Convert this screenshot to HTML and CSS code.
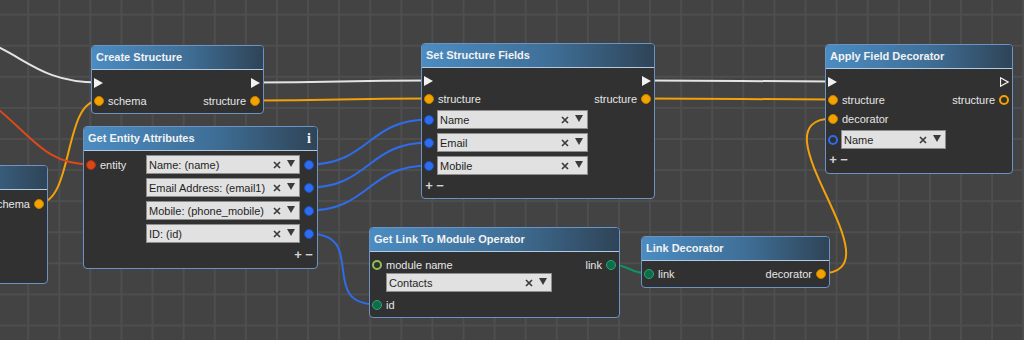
FILE: index.html
```html
<!DOCTYPE html>
<html lang="en">
<head>
    <meta charset="UTF-8">
    <meta name="viewport" content="width=device-width, initial-scale=1.0">
    <title>Structure Graph</title>
    <link rel="stylesheet" href="styles.css">
</head>
<body>
    <div class="canvas">
        <svg class="wires" width="1024" height="340" viewBox="0 0 1024 340">
            <!-- execution flow -->
            <path class="wire flow" d="M -40 35 C 20 45, 30 82.5, 98 82.5"/>
            <path class="wire flow" d="M 254 82.5 C 340 82.5, 340 80.5, 426 80.5"/>
            <path class="wire flow" d="M 649 80.5 C 740 80.5, 740 81.5, 830 81.5"/>
            <!-- structures -->
            <path class="wire orange" d="M 38 203.5 C 74 203.5, 63 100.5, 99 100.5"/>
            <path class="wire orange" d="M 254 100.5 C 340 100.5, 340 98.5, 429 98.5"/>
            <path class="wire orange" d="M 645 98.5 C 740 98.5, 740 99.5, 833 99.5"/>
            <path class="wire orange" d="M 820 273.5 C 905 273.5, 748 118.5, 833 118.5"/>
            <!-- entity -->
            <path class="wire red" d="M -20 95 C 30 130, 40 164.5, 91 164.5"/>
            <!-- attributes -->
            <path class="wire blue" d="M 308 164.5 C 370 164.5, 367 119.5, 429 119.5"/>
            <path class="wire blue" d="M 308 187.5 C 370 187.5, 367 142.5, 429 142.5"/>
            <path class="wire blue" d="M 308 210.5 C 370 210.5, 367 165.5, 429 165.5"/>
            <path class="wire blue" d="M 308 233.5 C 370 233.5, 316 304.5, 377 304.5"/>
            <!-- links -->
            <path class="wire teal" d="M 610 264.5 C 630 264.5, 629 273.5, 649 273.5"/>
        </svg>

        <!-- partly scrolled off the left edge -->
        <div class="node n-schema">
            <div class="node-head"></div>
            <div class="node-body">
                <div class="row">
                    <span class="grow"></span>
                    <span class="label">schema</span>
                    <span class="pin orange"></span>
                </div>
            </div>
        </div>

        <div class="node n-create">
            <div class="node-head"><span>Create Structure</span></div>
            <div class="node-body">
                <div class="row flow">
                    <svg class="tri" width="9" height="10"><polygon points="0,0 9,5 0,10"/></svg>
                    <span class="grow"></span>
                    <svg class="tri" width="9" height="10"><polygon points="0,0 9,5 0,10"/></svg>
                </div>
                <div class="row">
                    <span class="pin orange"></span>
                    <span class="label">schema</span>
                    <span class="grow"></span>
                    <span class="label">structure</span>
                    <span class="pin orange"></span>
                </div>
            </div>
        </div>

        <div class="node n-entity">
            <div class="node-head"><span>Get Entity Attributes</span><span class="info">i</span></div>
            <div class="node-body split">
                <div class="col-left">
                    <div class="row field-row">
                        <span class="pin red"></span>
                        <span class="label">entity</span>
                    </div>
                </div>
                <div class="col-right">
                    <div class="row field-row">
                        <div class="select wide">
                            <span class="value">Name: (name)</span>
                            <svg class="clear" width="8" height="8"><path d="M1 1 L7 7 M7 1 L1 7"/></svg>
                            <span class="caret"></span>
                        </div>
                        <span class="pin blue gap"></span>
                    </div>
                    <div class="row field-row">
                        <div class="select wide">
                            <span class="value">Email Address: (email1)</span>
                            <svg class="clear" width="8" height="8"><path d="M1 1 L7 7 M7 1 L1 7"/></svg>
                            <span class="caret"></span>
                        </div>
                        <span class="pin blue gap"></span>
                    </div>
                    <div class="row field-row">
                        <div class="select wide">
                            <span class="value">Mobile: (phone_mobile)</span>
                            <svg class="clear" width="8" height="8"><path d="M1 1 L7 7 M7 1 L1 7"/></svg>
                            <span class="caret"></span>
                        </div>
                        <span class="pin blue gap"></span>
                    </div>
                    <div class="row field-row">
                        <div class="select wide">
                            <span class="value">ID: (id)</span>
                            <svg class="clear" width="8" height="8"><path d="M1 1 L7 7 M7 1 L1 7"/></svg>
                            <span class="caret"></span>
                        </div>
                        <span class="pin blue gap"></span>
                    </div>
                    <div class="row pm-row right">
                        <span class="pm">+</span><span class="pm">&minus;</span>
                    </div>
                </div>
            </div>
        </div>

        <div class="node n-set">
            <div class="node-head"><span>Set Structure Fields</span></div>
            <div class="node-body">
                <div class="row flow">
                    <svg class="tri" width="9" height="10"><polygon points="0,0 9,5 0,10"/></svg>
                    <span class="grow"></span>
                    <svg class="tri" width="9" height="10"><polygon points="0,0 9,5 0,10"/></svg>
                </div>
                <div class="row">
                    <span class="pin orange"></span>
                    <span class="label">structure</span>
                    <span class="grow"></span>
                    <span class="label">structure</span>
                    <span class="pin orange"></span>
                </div>
                <div class="row field-row">
                    <span class="pin blue"></span>
                    <div class="select mid">
                        <span class="value">Name</span>
                        <svg class="clear" width="8" height="8"><path d="M1 1 L7 7 M7 1 L1 7"/></svg>
                        <span class="caret"></span>
                    </div>
                </div>
                <div class="row field-row">
                    <span class="pin blue"></span>
                    <div class="select mid">
                        <span class="value">Email</span>
                        <svg class="clear" width="8" height="8"><path d="M1 1 L7 7 M7 1 L1 7"/></svg>
                        <span class="caret"></span>
                    </div>
                </div>
                <div class="row field-row">
                    <span class="pin blue"></span>
                    <div class="select mid">
                        <span class="value">Mobile</span>
                        <svg class="clear" width="8" height="8"><path d="M1 1 L7 7 M7 1 L1 7"/></svg>
                        <span class="caret"></span>
                    </div>
                </div>
                <div class="row pm-row">
                    <span class="pm">+</span><span class="pm">&minus;</span>
                </div>
            </div>
        </div>

        <div class="node n-apply">
            <div class="node-head"><span>Apply Field Decorator</span></div>
            <div class="node-body">
                <div class="row flow">
                    <svg class="tri" width="9" height="10"><polygon points="0,0 9,5 0,10"/></svg>
                    <span class="grow"></span>
                    <svg class="tri hollow" width="9" height="10"><polygon points="0.5,0.8 8,5 0.5,9.2"/></svg>
                </div>
                <div class="row">
                    <span class="pin orange"></span>
                    <span class="label">structure</span>
                    <span class="grow"></span>
                    <span class="label">structure</span>
                    <span class="pin orange hollow"></span>
                </div>
                <div class="row">
                    <span class="pin orange"></span>
                    <span class="label">decorator</span>
                </div>
                <div class="row field-row">
                    <span class="pin blue hollow"></span>
                    <div class="select short">
                        <span class="value">Name</span>
                        <svg class="clear" width="8" height="8"><path d="M1 1 L7 7 M7 1 L1 7"/></svg>
                        <span class="caret"></span>
                    </div>
                </div>
                <div class="row pm-row">
                    <span class="pm">+</span><span class="pm">&minus;</span>
                </div>
            </div>
        </div>

        <div class="node n-link">
            <div class="node-head"><span>Get Link To Module Operator</span></div>
            <div class="node-body">
                <div class="row tight">
                    <span class="pin green hollow"></span>
                    <span class="label">module name</span>
                    <span class="grow"></span>
                    <span class="label">link</span>
                    <span class="pin teal"></span>
                </div>
                <div class="row select-row">
                    <div class="select long">
                        <span class="value">Contacts</span>
                        <svg class="clear" width="8" height="8"><path d="M1 1 L7 7 M7 1 L1 7"/></svg>
                        <span class="caret"></span>
                    </div>
                </div>
                <div class="row id-row">
                    <span class="pin teal"></span>
                    <span class="label">id</span>
                </div>
            </div>
        </div>

        <div class="node n-decorator">
            <div class="node-head"><span>Link Decorator</span></div>
            <div class="node-body">
                <div class="row">
                    <span class="pin teal"></span>
                    <span class="label">link</span>
                    <span class="grow"></span>
                    <span class="label">decorator</span>
                    <span class="pin orange"></span>
                </div>
            </div>
        </div>
    </div>
</body>
</html>
```

FILE: styles.css
```css
body {
    margin: 0;
    background-color: #434343;
    font-family: "Liberation Sans", Arial, sans-serif;
    font-size: 11px;
    color: #e6e6e6;
}

.canvas {
    position: relative;
    width: 1024px;
    height: 340px;
    overflow: hidden;
    background-color: #434343;
    background-image:
        linear-gradient(to right, transparent 27px, #4e4e4e 27px, #4e4e4e 29px, transparent 29px),
        linear-gradient(to bottom, transparent 14px, #4e4e4e 14px, #4e4e4e 16px, transparent 16px);
    background-size: 31.1px 31.1px;
}

/* wires sit under the nodes */
.wires {
    position: absolute;
    left: 0;
    top: 0;
}

.wire {
    fill: none;
    stroke-width: 2;
}

.wire.flow { stroke: #e4e4e4; }
.wire.orange { stroke: #f2a10a; }
.wire.red { stroke: #dd4a18; }
.wire.blue { stroke: #2f6ce8; }
.wire.teal { stroke: #12906a; }

/* nodes */
.node {
    position: absolute;
    box-sizing: border-box;
    border: 1px solid #6d93c4;
    border-radius: 4px;
    background-color: #313131;
    overflow: hidden;
}

.n-schema { left: -141px; top: 165px; width: 189px; height: 119px; }
.n-create { left: 91px; top: 45px; width: 173px; height: 69px; }
.n-entity { left: 83px; top: 126px; width: 235px; height: 143px; }
.n-set { left: 421px; top: 43px; width: 234px; height: 156px; }
.n-apply { left: 825px; top: 44px; width: 188px; height: 130px; }
.n-link { left: 369px; top: 227px; width: 251px; height: 91px; }
.n-decorator { left: 641px; top: 236px; width: 189px; height: 52px; }

.node-head {
    display: flex;
    justify-content: space-between;
    height: 23px;
    line-height: 23px;
    padding: 0 6px 0 4px;
    border-bottom: 1px solid #b3cbe0;
    background: linear-gradient(to right, #4b8cc2 0%, #3f6f97 55%, #2f4457 100%);
    font-weight: bold;
    color: #f2f2f2;
    white-space: nowrap;
}

.info {
    font-family: "Liberation Serif", serif;
    font-size: 14px;
    font-weight: bold;
    color: #f4f4f4;
}

.node-body {
    padding: 4px 3px 0 2px;
}

.n-schema .node-body { padding-top: 4px; }
.n-decorator .node-body { padding-top: 3px; }
.n-entity .node-body { padding-top: 2px; }

.row {
    display: flex;
    align-items: center;
    height: 19px;
}

.row.flow { height: 17px; }
.row.field-row { height: 23px; }
.row.tight { height: 17px; }
.row.select-row { padding-left: 14px; }
.row.id-row { margin-top: 3px; }
.row.pm-row { height: 18px; }
.row.right { justify-content: flex-end; }

.grow { flex: 1; }

.split {
    display: flex;
}

.col-left { flex: 1; align-self: flex-start; }

.label {
    margin: 0 4px;
    white-space: nowrap;
}

/* ports */
.pin {
    flex: none;
    box-sizing: border-box;
    width: 10px;
    height: 10px;
    border: 1px solid;
    border-radius: 50%;
}

.pin.gap { margin-left: 4px; }
.pin.orange { background-color: #f4a200; border-color: #c47f00; }
.pin.blue { background-color: #2e6cf0; border-color: #1e4fb8; }
.pin.red { background-color: #d8461a; border-color: #a83210; }
.pin.teal { background-color: #0d6e4b; border-color: #2fa477; border-width: 1.5px; }
.pin.hollow { background-color: #313131; border-width: 2px; }
.pin.orange.hollow { border-color: #f4a200; }
.pin.blue.hollow { border-color: #2e6cf0; }
.pin.green.hollow { border-color: #8cc152; }

.tri { flex: none; fill: #f2f2f2; }
.tri.hollow { fill: none; stroke: #f2f2f2; stroke-width: 1.2; }

/* dropdown fields */
.select {
    display: flex;
    align-items: center;
    box-sizing: border-box;
    height: 19px;
    margin-left: 3px;
    padding: 1px 0 0 2px;
    border: 1px solid #8e8e8e;
    background-color: #e1e1e1;
    color: #1f1f1f;
}

.select.wide { width: 154px; margin-left: 0; }
.select.mid { width: 151px; }
.select.short { width: 105px; }
.select.long { width: 166px; margin-left: 0; }

.select .value {
    flex: 1;
    overflow: hidden;
    white-space: nowrap;
}

.clear {
    flex: none;
    margin: -1px 6px 0 0;
    stroke: #3c3c3c;
    stroke-width: 1.7;
}

.caret {
    flex: none;
    align-self: flex-start;
    width: 0;
    height: 0;
    margin: 3px 4px 0 0;
    border-left: 4px solid transparent;
    border-right: 4px solid transparent;
    border-top: 7px solid #3a3a3a;
}

.pm {
    width: 8px;
    margin-right: 3px;
    font-size: 13px;
    font-weight: bold;
    line-height: 18px;
    color: #d4d4d4;
    text-align: center;
}

.pm-row .pm:first-child { margin-left: 1px; }
.pm-row.right .pm:last-child { margin-right: 1px; }
.pm-row.right { margin-top: 1px; }
```
